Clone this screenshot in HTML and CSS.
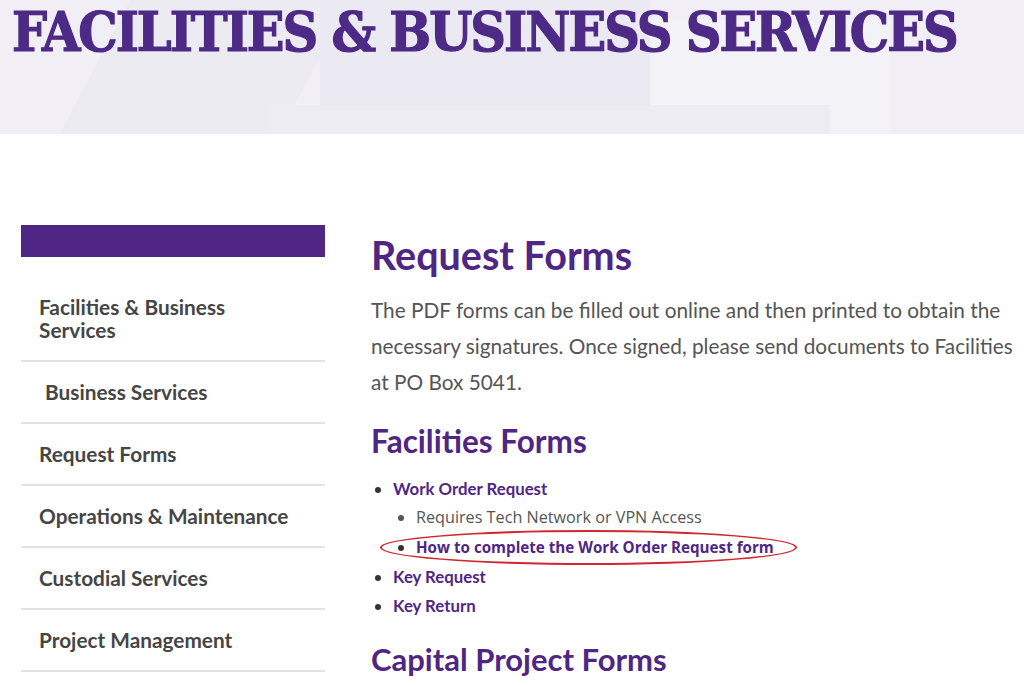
FILE: index.html
```html
<!DOCTYPE html>
<html>
<head>
<meta charset="utf-8">
<link rel="stylesheet" href="styles.css">
</head>
<body>
<header class="banner">
  <div class="shape s1"></div>
  <div class="shape s2"></div>
  <div class="shape s3"></div>
  <div class="shape s4"></div>
  <h1 class="banner-title">FACILITIES &amp; BUSINESS SERVICES</h1>
</header>
<div class="page">
  <aside class="sidebar">
    <div class="side-bar-top"></div>
    <nav class="side-nav">
      <a class="nav-item first">Facilities &amp; Business<br>Services</a>
      <a class="nav-item indent">Business Services</a>
      <a class="nav-item">Request Forms</a>
      <a class="nav-item">Operations &amp; Maintenance</a>
      <a class="nav-item">Custodial Services</a>
      <a class="nav-item">Project Management</a>
    </nav>
  </aside>
  <main class="content">
    <h2 class="page-title">Request Forms</h2>
    <p class="intro">The PDF forms can be filled out online and then printed to obtain the necessary signatures. Once signed, please send documents to Facilities at PO Box 5041.</p>
    <h3 class="section-title">Facilities Forms</h3>
    <ul class="forms">
      <li><a class="link">Work Order Request</a>
        <ul class="sub">
          <li class="note">Requires Tech Network or VPN Access</li>
          <li class="circled"><a class="link alt">How to complete the Work Order Request form</a><span class="ring"></span></li>
        </ul>
      </li>
      <li><a class="link">Key Request</a></li>
      <li><a class="link">Key Return</a></li>
    </ul>
    <h3 class="section-title last">Capital Project Forms</h3>
  </main>
</div>
</body>
</html>
```
FILE: styles.css
```css
html, body { margin: 0; padding: 0; background: #fff; }
body { font-family: Lato, "Noto Sans", sans-serif; overflow: hidden; height: 685px; }

.banner {
  position: relative;
  height: 134px;
  background: #f1eff5;
  overflow: hidden;
}
.shape { position: absolute; }
.s1 { left: 95px; top: 0; width: 220px; height: 134px; background: #edebf2; transform: skewX(-28deg); }
.s2 { left: 320px; top: 0; width: 330px; height: 134px; background: #ebe9f1; }
.s3 { left: 650px; top: 20px; width: 240px; height: 114px; background: #f3f2f7; }
.s4 { left: 270px; top: 105px; width: 560px; height: 30px; background: #eeecf3; }
.banner-title {
  position: relative;
  margin: 0;
  padding: 0 0 0 12px;
  font-family: "DejaVu Serif", serif;
  font-stretch: condensed;
  font-weight: bold;
  font-size: 55px;
  line-height: 64px;
  letter-spacing: -2px;
  white-space: nowrap;
  color: #4c2a85;
  -webkit-text-stroke: 1.2px #4c2a85;
}

.page {
  display: flex;
  padding: 91px 0 0 21px;
  gap: 46px;
}
.sidebar { width: 304px; flex: none; }
.side-bar-top { height: 32px; background: #4f2683; margin-bottom: 34px; }
.side-nav { display: flex; flex-direction: column; }
.nav-item {
  display: block;
  padding: 17px 0 17px 18px;
  border-bottom: 2px solid #e2e2e2;
  font-size: 20.8px;
  font-weight: bold;
  line-height: 26px;
  color: #454545;
}
.nav-item.first { padding-top: 4px; padding-bottom: 19px; line-height: 23px; }
.nav-item.indent { padding-left: 24px; }

.content { flex: 1; }
.page-title {
  margin: 7px 0 0 0;
  font-size: 39.5px;
  font-weight: bold;
  line-height: 46px;
  color: #4f2683;
}
.intro {
  margin: 14px 0 0 0;
  font-size: 20.8px;
  line-height: 36px;
  color: #555;
}
.section-title {
  margin: 21px 0 0 0;
  font-size: 31.5px;
  font-weight: bold;
  line-height: 40px;
  color: #4f2683;
}
.section-title.last { margin-top: 19px; font-size: 31px; }
.forms { margin: 13px 0 0 0; padding: 0 0 0 22px; list-style: disc; color: #333; }
.forms li { font-size: 16.8px; line-height: 29px; }
.forms .sub { margin: 0; padding: 0 0 0 23px; list-style: disc; }
.link { color: #4f2683; font-weight: bold; }
.link.alt { font-family: "Open Sans", sans-serif; font-size: 15.2px; }
.forms .note { color: #555; font-family: "Open Sans", sans-serif; font-size: 16.2px; }
.circled { position: relative; }
.ring {
  position: absolute;
  left: -36px; top: -2px;
  width: 413px; height: 31px;
  border: 2px solid #d0282e;
  border-radius: 50%;
}
```
